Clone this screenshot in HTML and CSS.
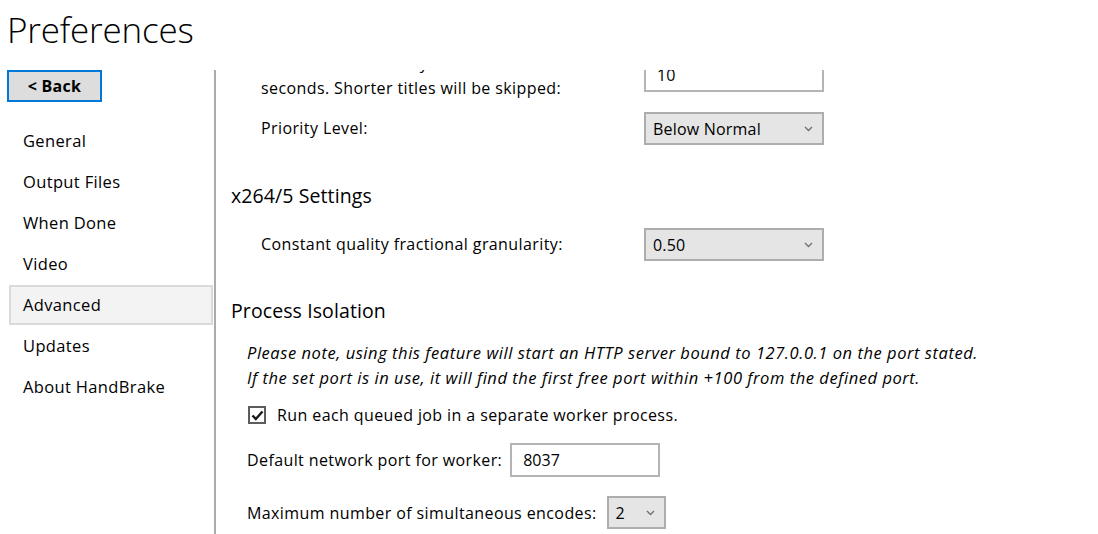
FILE: index.html
```html
<!DOCTYPE html>
<html>
<head>
<meta charset="utf-8">
<link rel="stylesheet" href="styles.css">
</head>
<body>
<h1 class="title">Preferences</h1>
<div class="main">
  <aside class="sidebar">
    <button class="back">&lt; Back</button>
    <ul class="nav">
      <li class="nav-item">General</li>
      <li class="nav-item">Output Files</li>
      <li class="nav-item">When Done</li>
      <li class="nav-item">Video</li>
      <li class="nav-item selected">Advanced</li>
      <li class="nav-item">Updates</li>
      <li class="nav-item">About HandBrake</li>
    </ul>
  </aside>
  <section class="content">
    <div class="inner">
      <div class="row row-first">
        <div class="label">Minimum time of any title in<br>seconds. Shorter titles will be skipped:</div>
        <div class="textbox wide">10</div>
      </div>
      <div class="row row-priority">
        <div class="label">Priority Level:</div>
        <div class="combo wide"><span>Below Normal</span><svg class="chev" width="9" height="6" viewBox="0 0 9 6"><polyline points="1,1 4.5,4.5 8,1" fill="none" stroke="#6d6d6d" stroke-width="1.3"/></svg></div>
      </div>
      <h2 class="section">x264/5 Settings</h2>
      <div class="row row-cq">
        <div class="label">Constant quality fractional granularity:</div>
        <div class="combo wide"><span>0.50</span><svg class="chev" width="9" height="6" viewBox="0 0 9 6"><polyline points="1,1 4.5,4.5 8,1" fill="none" stroke="#6d6d6d" stroke-width="1.3"/></svg></div>
      </div>
      <h2 class="section section-pi">Process Isolation</h2>
      <p class="note">Please note, using this feature will start an HTTP server bound to 127.0.0.1 on the port stated.<br>If the set port is in use, it will find the first free port within +100 from the defined port.</p>
      <div class="check-row">
        <span class="checkbox"><svg width="13" height="11" viewBox="0 0 13 11"><polyline points="1.5,5.5 4.8,9 11.5,1.5" fill="none" stroke="#1a1a1a" stroke-width="2.4"/></svg></span>
        <span>Run each queued job in a separate worker process.</span>
      </div>
      <div class="inline-row port-row">
        <span>Default network port for worker:</span>
        <div class="textbox port">8037</div>
      </div>
      <div class="inline-row max-row">
        <span>Maximum number of simultaneous encodes:</span>
        <div class="combo small"><span>2</span><svg class="chev" width="9" height="6" viewBox="0 0 9 6"><polyline points="1,1 4.5,4.5 8,1" fill="none" stroke="#6d6d6d" stroke-width="1.3"/></svg></div>
      </div>
    </div>
  </section>
</div>
</body>
</html>
```

FILE: styles.css
```css
html, body {
  margin: 0;
  padding: 0;
  background: #ffffff;
}
body {
  width: 1098px;
  height: 534px;
  overflow: hidden;
  font-family: "Open Sans", "Noto Sans", "Liberation Sans", sans-serif;
  color: #000;
  font-size: 16px;
  letter-spacing: 0.4px;
}
.title {
  margin: 0;
  padding-left: 7px;
  height: 70px;
  line-height: 60px;
  font-size: 35px;
  font-weight: 300;
  letter-spacing: -0.2px;
}
.main {
  display: flex;
  height: 464px;
}
.sidebar {
  width: 214px;
  flex: none;
  border-right: 2px solid #ababab;
}
.back {
  display: block;
  margin: 0 0 0 7px;
  width: 95px;
  height: 32px;
  border: 2px solid #0078d7;
  background: #dddddd;
  font-family: inherit;
  font-weight: 700;
  font-size: 16px;
  letter-spacing: 0.3px;
  color: #000;
  padding: 0;
}
.nav {
  list-style: none;
  margin: 19px 0 0 9px;
  padding: 0;
}
.nav-item {
  width: 204px;
  box-sizing: border-box;
  height: 40px;
  margin-bottom: 1px;
  border: 2px solid transparent;
  padding-left: 12px;
  line-height: 36px;
  font-size: 16.5px;
  letter-spacing: 0.35px;
}
.nav-item.selected {
  background: #f3f3f3;
  border-color: #dadada;
}
.content {
  flex: 1;
  overflow: hidden;
}
.inner {
  padding-left: 15px;
}
.row {
  display: flex;
  align-items: center;
  padding-left: 30px;
}
.label {
  width: 383px;
  flex: none;
  line-height: 23px;
}
.row-first { margin-top: -19.5px; }
.row-first .label { line-height: 25px; }
.row-priority { margin-top: 11.5px; }
.row-cq { margin-top: 18px; }
.textbox {
  box-sizing: border-box;
  height: 33px;
  border: 2px solid #b4b4b4;
  background: #fff;
  padding-left: 11px;
  line-height: 29px;
  letter-spacing: 0;
}
.textbox.wide { width: 180px; }
.textbox.port { width: 150px; height: 34px; line-height: 30px; }
.combo {
  box-sizing: border-box;
  height: 33px;
  border: 2px solid #adadad;
  background: #e5e5e5;
  padding: 0 9px 0 7px;
  display: flex;
  align-items: center;
  justify-content: space-between;
  letter-spacing: 0.2px;
}
.combo.wide { width: 180px; }
.combo.small { width: 59px; }
.chev { flex: none; }
.section {
  margin: 37px 0 0 0;
  font-weight: 400;
  font-size: 19.5px;
  letter-spacing: 0.1px;
  line-height: 28px;
  height: 28px;
}
.section-pi { margin-top: 36px; }
.note {
  margin: 15px 0 0 16px;
  font-style: italic;
  line-height: 25px;
  font-size: 16.5px;
  letter-spacing: 0.55px;
}
.check-row {
  display: flex;
  align-items: center;
  margin: 14px 0 0 17px;
  height: 22px;
}
.checkbox {
  box-sizing: border-box;
  width: 18px;
  height: 18px;
  border: 2px solid #5c5c5c;
  display: flex;
  align-items: center;
  justify-content: center;
  margin-right: 11px;
}
.inline-row {
  display: flex;
  align-items: center;
  margin-left: 16px;
  gap: 8px;
}
.port-row { margin-top: 17px; }
.max-row { margin-top: 19px; }
.max-row { gap: 10px; }
```
